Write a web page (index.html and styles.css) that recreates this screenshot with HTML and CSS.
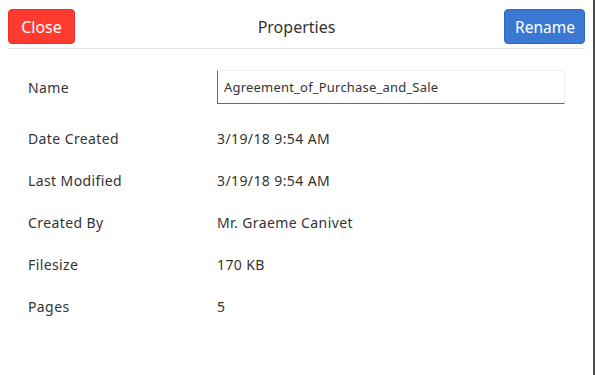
FILE: index.html
```html
<!DOCTYPE html>
<html lang="en">
<head>
  <meta charset="UTF-8">
  <meta name="viewport" content="width=device-width, initial-scale=1.0">
  <title>Properties</title>
  <link rel="stylesheet" href="styles.css">
</head>
<body>
  <div class="modal">
    <!-- Header -->
    <div class="modal-header">
      <button class="btn btn-close">Close</button>
      <h2>Properties</h2>
      <button class="btn btn-rename">Rename</button>
    </div>

    <!-- Properties -->
    <div class="modal-body">
      <div class="row">
        <div class="label">Name</div>
        <input class="name-input" type="text" value="Agreement_of_Purchase_and_Sale">
      </div>
      <div class="row">
        <div class="label">Date Created</div>
        <div class="value">3/19/18 9:54 AM</div>
      </div>
      <div class="row">
        <div class="label">Last Modified</div>
        <div class="value">3/19/18 9:54 AM</div>
      </div>
      <div class="row">
        <div class="label">Created By</div>
        <div class="value">Mr. Graeme Canivet</div>
      </div>
      <div class="row">
        <div class="label">Filesize</div>
        <div class="value">170 KB</div>
      </div>
      <div class="row">
        <div class="label">Pages</div>
        <div class="value">5</div>
      </div>
    </div>
  </div>
</body>
</html>
```

FILE: styles.css
```css
html, body {
  margin: 0;
  padding: 0;
  background: #fff;
}
body {
  font-family: "Noto Sans", "Open Sans", sans-serif;
  color: #333;
  width: 597px;
  height: 375px;
  overflow: hidden;
}
.modal {
  width: 595px;
  height: 375px;
  box-sizing: border-box;
  border-right: 2px solid #4a4a4a;
  background: #fff;
}
.modal-header {
  display: flex;
  align-items: center;
  justify-content: space-between;
  margin: 0 8px;
  padding-top: 9px;
  height: 39px;
  border-bottom: 1px solid #e3e3e3;
}
.modal-header h2 {
  margin: 0 0 0 14px;
  font-size: 16px;
  font-weight: normal;
  color: #333;
  padding-bottom: 4px;
}
.btn {
  height: 35px;
  align-self: flex-start;
  padding: 0 10px;
  font-family: inherit;
  font-size: 16px;
  color: #fff;
  border-radius: 4px;
  cursor: pointer;
}
.btn-close {
  width: 67px;
  background: #ff3b2f;
  border: 1px solid #ef2f24;
}
.btn-rename {
  width: 81px;
  font-size: 15.5px;
  background: #3a78d2;
  border: 1px solid #2f68c0;
}
.modal-body {
  padding: 21px 28px 0 28px;
}
.row {
  display: flex;
  align-items: center;
  height: 42px;
  font-size: 14px;
  letter-spacing: 0.4px;
}
.row:first-child {
  height: 34px;
  margin-bottom: 13px;
}
.label {
  width: 189px;
}
.name-input {
  flex: 1;
  height: 34px;
  box-sizing: border-box;
  padding: 0 6px;
  font-family: inherit;
  font-size: 13px;
  letter-spacing: 0.2px;
  color: #333;
  border: 1px solid #eeeefa;
  border-left-color: #3f72c6;
  border-bottom-color: #3f72c6;
  outline: none;
}
```
